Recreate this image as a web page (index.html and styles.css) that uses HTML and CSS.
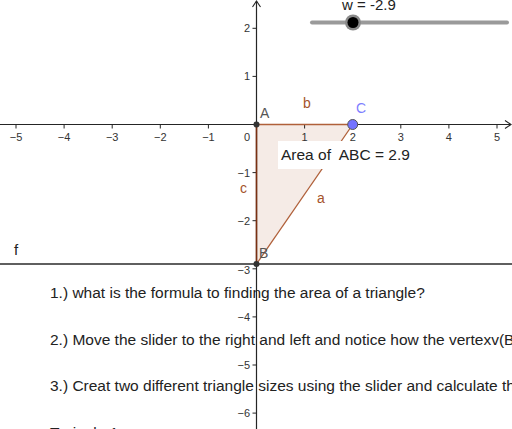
FILE: index.html
```html
<!DOCTYPE html>
<html>
<head>
<meta charset="utf-8">
<link rel="stylesheet" href="styles.css">
</head>
<body>
<div class="canvas">
  <svg class="graph" width="512" height="429" viewBox="0 0 512 429" xmlns="http://www.w3.org/2000/svg">
    <polygon class="tri-fill" points="256.5,124.5 352.7,124.5 256.5,264"/>
    <line class="axis" x1="0" y1="124.5" x2="511" y2="124.5"/>
    <polyline class="arrow" points="505,120.5 511,124.5 505,128.5"/>
    <line class="axis" x1="256.5" y1="1" x2="256.5" y2="429"/>
    <polyline class="arrow" points="252.5,7 256.5,1 260.5,7"/>
    <g class="ticks">
      <line x1="16" y1="124.5" x2="16" y2="128.5"/>
      <line x1="64.1" y1="124.5" x2="64.1" y2="128.5"/>
      <line x1="112.2" y1="124.5" x2="112.2" y2="128.5"/>
      <line x1="160.3" y1="124.5" x2="160.3" y2="128.5"/>
      <line x1="208.4" y1="124.5" x2="208.4" y2="128.5"/>
      <line x1="304.6" y1="124.5" x2="304.6" y2="128.5"/>
      <line x1="352.7" y1="124.5" x2="352.7" y2="128.5"/>
      <line x1="400.8" y1="124.5" x2="400.8" y2="128.5"/>
      <line x1="448.9" y1="124.5" x2="448.9" y2="128.5"/>
      <line x1="497" y1="124.5" x2="497" y2="128.5"/>
      <line x1="252.5" y1="28.3" x2="256.5" y2="28.3"/>
      <line x1="252.5" y1="76.4" x2="256.5" y2="76.4"/>
      <line x1="252.5" y1="172.6" x2="256.5" y2="172.6"/>
      <line x1="252.5" y1="220.7" x2="256.5" y2="220.7"/>
      <line x1="252.5" y1="268.8" x2="256.5" y2="268.8"/>
      <line x1="252.5" y1="316.9" x2="256.5" y2="316.9"/>
      <line x1="252.5" y1="365" x2="256.5" y2="365"/>
      <line x1="252.5" y1="413.1" x2="256.5" y2="413.1"/>
    </g>
    <g class="xlabels">
      <text x="16" y="141">−5</text>
      <text x="64.1" y="141">−4</text>
      <text x="112.2" y="141">−3</text>
      <text x="160.3" y="141">−2</text>
      <text x="208.4" y="141">−1</text>
      <text x="304.6" y="141">1</text>
      <text x="352.7" y="141">2</text>
      <text x="400.8" y="141">3</text>
      <text x="448.9" y="141">4</text>
      <text x="497" y="141">5</text>
    </g>
    <g class="ylabels">
      <text x="250" y="141">0</text>
      <text x="250" y="32.3">2</text>
      <text x="250" y="80.4">1</text>
      <text x="250" y="176.6">−1</text>
      <text x="250" y="224.7">−2</text>
      <text x="250" y="274">−3</text>
      <text x="250" y="320.9">−4</text>
      <text x="250" y="369">−5</text>
      <text x="250" y="417.1">−6</text>
    </g>
    <line class="fline" x1="0" y1="264" x2="512" y2="264"/>
    <text class="flabel" x="14" y="255">f</text>
    <line class="edge" x1="256.5" y1="124.5" x2="352.7" y2="124.5"/>
    <line class="edge" x1="352.7" y1="124.5" x2="256.5" y2="264"/>
    <line class="edge edge-c" x1="256.5" y1="124.5" x2="256.5" y2="264"/>
    <rect class="areabox" x="278" y="141" width="136" height="28"/>
    <text class="areatext" x="281" y="160" xml:space="preserve">Area of  ABC = 2.9</text>
    <text class="elabel" x="303" y="108">b</text>
    <text class="elabel" x="317" y="203">a</text>
    <text class="elabel" x="240" y="193">c</text>
    <circle class="pt" cx="256.5" cy="124.5" r="3"/>
    <circle class="pt" cx="256.5" cy="264" r="3"/>
    <circle class="ptc" cx="352.7" cy="124.5" r="5"/>
    <text class="plabel" x="260" y="118">A</text>
    <text class="plabel" x="259" y="258">B</text>
    <text class="plabel-c" x="356" y="113">C</text>
    <line class="track" x1="312" y1="22.5" x2="507" y2="22.5"/>
    <circle class="halo" cx="353" cy="22.5" r="8"/>
    <circle class="knob" cx="353" cy="22.5" r="5.5"/>
    <text class="wlabel" x="342" y="10">w = -2.9</text>
  </svg>
  <div class="questions">
    <p class="q">1.) what is the formula to finding the area of a triangle?</p>
    <p class="q">2.) Move the slider to the right and left and notice how the vertexv(B</p>
    <p class="q">3.) Creat two different triangle sizes using the slider and calculate th</p>
    <p class="q">Traingle 1:</p>
  </div>
</div>
</body>
</html>
```
FILE: styles.css
```css
html, body {
  margin: 0;
  padding: 0;
  background: #ffffff;
  overflow: hidden;
}
.canvas {
  position: relative;
  width: 512px;
  height: 429px;
  overflow: hidden;
  font-family: "Liberation Sans", Arial, sans-serif;
}
.graph {
  position: absolute;
  left: 0;
  top: 0;
}
.tri-fill { fill: #f5ebe6; stroke: none; }
.axis { stroke: #252525; stroke-width: 1.2; }
.arrow { fill: none; stroke: #252525; stroke-width: 1.1; }
.ticks line { stroke: #252525; stroke-width: 1; }
.xlabels text {
  font-family: "Liberation Sans", Arial, sans-serif;
  font-size: 11px;
  fill: #333333;
  text-anchor: middle;
}
.ylabels text {
  font-family: "Liberation Sans", Arial, sans-serif;
  font-size: 11px;
  fill: #333333;
  text-anchor: end;
}
.fline { stroke: #2a2a2a; stroke-width: 1.5; }
.flabel {
  font-family: "Liberation Sans", Arial, sans-serif;
  font-size: 15px;
  fill: #222222;
}
.edge { stroke: #b0603a; stroke-width: 1.3; }
.edge-c { stroke: #7a3012; stroke-width: 1.6; }
.areabox { fill: #ffffff; }
.areatext {
  font-family: "Liberation Sans", Arial, sans-serif;
  font-size: 15.5px;
  fill: #222222;
  white-space: pre;
}
.elabel {
  font-family: "Liberation Sans", Arial, sans-serif;
  font-size: 14px;
  fill: #a5532b;
}
.pt { fill: #333333; }
.ptc { fill: #7373ff; stroke: #555555; stroke-width: 1; }
.plabel {
  font-family: "Liberation Sans", Arial, sans-serif;
  font-size: 14px;
  fill: #555555;
}
.plabel-c {
  font-family: "Liberation Sans", Arial, sans-serif;
  font-size: 14px;
  fill: #8080ff;
}
.track { stroke: #9a9a9a; stroke-width: 4; stroke-linecap: round; }
.halo { fill: #8a8a8a; }
.knob { fill: #000000; }
.wlabel {
  font-family: "Liberation Sans", Arial, sans-serif;
  font-size: 15px;
  fill: #222222;
}
.questions {
  position: absolute;
  left: 50px;
  top: 284px;
  display: flex;
  flex-direction: column;
  gap: 28.5px;
  white-space: nowrap;
}
.q {
  margin: 0;
  font-size: 15.5px;
  line-height: 18px;
  color: #222222;
}
```
